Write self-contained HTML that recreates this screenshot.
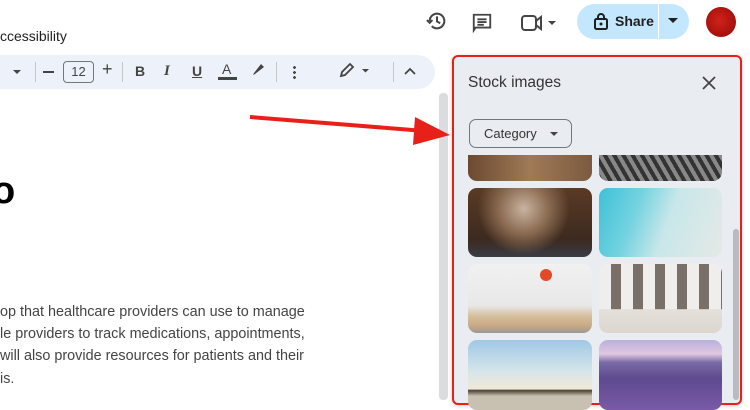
<!DOCTYPE html>
<html><head><meta charset="utf-8"><style>
*{box-sizing:border-box;margin:0;padding:0}
body{width:750px;height:400px;overflow:hidden;background:#fff;font-family:"Liberation Sans",Arial,sans-serif;position:relative;color:#1f1f1f}
.a{position:absolute}
.tb{left:-20px;top:55px;width:455px;height:34px;background:#edf2fa;border-radius:17px}
.t{position:absolute;top:63px;font-size:14px;font-weight:bold;color:#444}
.sep{position:absolute;top:62px;width:1px;height:20px;background:#c7c7c7}
.p{position:absolute;left:0;font-size:14.4px;color:#444;white-space:nowrap}
.img{position:absolute;border-radius:9px;overflow:hidden}
</style></head><body>
<div class="a" style="left:0;top:28px;font-size:14px;color:#1f1f1f">ccessibility</div>
<svg class="a" style="left:426px;top:10px" width="22" height="22" viewBox="0 0 24 24"><path d="M4 12a8 8 0 1 1 2.3 5.6" fill="none" stroke="#444" stroke-width="2.2"/><path d="M1 11l3 3 3-3" fill="none" stroke="#444" stroke-width="2.2"/><path d="M12 7v5.5l3.5 2" fill="none" stroke="#444" stroke-width="2.2"/></svg>
<svg class="a" style="left:471px;top:12px" width="22" height="22" viewBox="0 0 24 24"><path d="M3 3h18v14H5l-2 3z" fill="none" stroke="#444" stroke-width="2"/><path d="M7 8h10M7 11h10M7 14h7" stroke="#444" stroke-width="2"/></svg>
<svg class="a" style="left:520px;top:12px" width="40" height="22" viewBox="0 0 40 22"><rect x="2" y="4" width="14" height="14" rx="3" fill="none" stroke="#444" stroke-width="2"/><path d="M16 9l5-4v12l-5-4z" fill="none" stroke="#444" stroke-width="2"/><path d="M28 9l4 4 4-4z" fill="#444"/></svg>
<div class="a" style="left:577px;top:4px;width:112px;height:35px;background:#c2e7ff;border-radius:18px"></div>
<div class="a" style="left:658px;top:4px;width:1px;height:35px;background:#fff"></div>
<svg class="a" style="left:593px;top:12px" width="16" height="18" viewBox="0 0 16 18"><rect x="2" y="7" width="12" height="10" rx="1.5" fill="none" stroke="#1f1f1f" stroke-width="2"/><path d="M5 7V5a3 3 0 0 1 6 0v2" fill="none" stroke="#1f1f1f" stroke-width="2"/><circle cx="8" cy="12" r="1.5" fill="#1f1f1f"/></svg>
<div class="a" style="left:615px;top:13px;font-size:14px;font-weight:bold;color:#1f1f1f">Share</div>
<svg class="a" style="left:668px;top:18px" width="10" height="6"><path d="M0 0h10L5 5z" fill="#1f1f1f"/></svg>
<div class="a" style="left:706px;top:7px;width:30px;height:30px;border-radius:50%;background:radial-gradient(circle at 45% 45%,#d0231a,#a5100c 70%,#c01a10)"></div>
<div class="a tb"></div>
<svg class="a" style="left:13px;top:70px" width="8" height="5"><path d="M0 0h8L4 4z" fill="#444"/></svg>
<div class="sep" style="left:35px"></div>
<div class="a" style="left:43px;top:71px;width:11px;height:2px;background:#444"></div>
<div class="a" style="left:63px;top:61px;width:31px;height:22px;border:1px solid #747775;border-radius:4px;font-size:13px;text-align:center;line-height:20px;color:#444">12</div>
<div class="a" style="left:102px;top:59px;font-size:18px;color:#444">+</div>
<div class="sep" style="left:122px"></div>
<div class="t" style="left:135px">B</div>
<div class="t" style="left:164px;font-style:italic;font-family:'Liberation Serif',serif;font-size:15px">I</div>
<div class="t" style="left:192px;text-decoration:underline">U</div>
<div class="t" style="left:222px;font-weight:normal;top:61px">A</div>
<div class="a" style="left:218px;top:77px;width:19px;height:3px;background:#444"></div>
<svg class="a" style="left:251px;top:62px" width="14" height="14" viewBox="0 0 14 14"><path d="M3 11l-1 2 2-1 9-7-3-3z" fill="#444"/></svg>
<div class="sep" style="left:276px"></div>
<div class="a" style="left:293px;top:65px;width:3px;height:14px;background:radial-gradient(circle,#444 1.3px,transparent 1.5px) 0 0/3px 5px"></div>
<svg class="a" style="left:339px;top:62px" width="34" height="16" viewBox="0 0 34 16"><path d="M2 14l1-4 8-8 3 3-8 8z" fill="none" stroke="#444" stroke-width="1.8"/><path d="M23 7h7l-3.5 3.5z" fill="#444"/></svg>
<div class="sep" style="left:393px"></div>
<svg class="a" style="left:404px;top:67px" width="12" height="8"><path d="M1 7l5-5 5 5" fill="none" stroke="#444" stroke-width="1.8"/></svg>
<div class="a" style="left:439px;top:93px;width:9px;height:307px;background:#dadce0;border-radius:4px"></div>
<div class="a" style="left:-8px;top:170px;font-size:38px;font-weight:bold;color:#000">o</div>
<div class="p" style="top:304px">op that healthcare providers can use to manage</div>
<div class="p" style="top:326px">le providers to track medications, appointments,</div>
<div class="p" style="top:348px">will also provide resources for patients and their</div>
<div class="p" style="top:371px">is.</div>
<div class="a" style="left:452px;top:55px;width:290px;height:350px;background:#e9edf2;border:2px solid #e8201a;border-radius:6px;box-shadow:0 1px 4px rgba(0,0,0,.2)"></div>
<div class="a" style="left:468px;top:74px;font-size:15.5px;color:#333">Stock images</div>
<svg class="a" style="left:702px;top:76px" width="14" height="14"><path d="M1 1l12 12M13 1L1 13" stroke="#444" stroke-width="1.8"/></svg>
<div class="a" style="left:469px;top:119px;width:103px;height:29px;border:1px solid #747775;border-radius:7px"></div>
<div class="a" style="left:484px;top:126px;font-size:13px;color:#333">Category</div>
<svg class="a" style="left:550px;top:132px" width="8" height="5"><path d="M0 0h8L4 4z" fill="#444"/></svg>
<div class="img" style="left:468px;top:155px;width:124px;height:26px;border-radius:0 0 9px 9px;background:linear-gradient(90deg,#6b4a32,#a07a55,#7b5a40)"></div>
<div class="img" style="left:599px;top:155px;width:123px;height:26px;border-radius:0 0 9px 9px;background:repeating-linear-gradient(60deg,#333 0 4px,#888 4px 8px)"></div>
<div class="img" style="left:468px;top:188px;width:124px;height:69px;background:radial-gradient(circle at 45% 30%,#c9b3a0 0,#8a6a50 30%,transparent 55%),linear-gradient(180deg,#5a3a24,#3c2a20 75%,#3a3c45)"></div>
<div class="img" style="left:599px;top:188px;width:123px;height:69px;background:linear-gradient(110deg,#3ec1d6 0,#74d3e0 30%,#c8e7ea 55%,#e6e8e6 100%)"></div>
<div class="img" style="left:468px;top:264px;width:124px;height:69px;background:linear-gradient(180deg,#f1f1f1 0,#e8e8e8 60%,#d6c0a0 75%,#c9a882 90%,#999 100%)"></div>
<div class="a" style="left:540px;top:269px;width:12px;height:12px;border-radius:50%;background:#e04a2a"></div>
<div class="img" style="left:599px;top:264px;width:123px;height:69px;background:linear-gradient(180deg,transparent 0,transparent 65%,#e4e0da 66%,#dcd6cf 100%),repeating-linear-gradient(90deg,#f0eeec 0 12px,#7a706a 12px 22px)"></div>
<div class="img" style="left:468px;top:340px;width:124px;height:70px;background:linear-gradient(180deg,#9fc8e6 0,#d6e6ea 45%,#f0e8d8 70%,#4a4032 72%,#c8c0b0 80%)"></div>
<div class="img" style="left:599px;top:340px;width:123px;height:70px;background:linear-gradient(180deg,#b9b0dc 0,#e0c8e0 20%,#7a6aa8 32%,#5e4a8e 55%,#7a5aa8 100%)"></div>
<div class="a" style="left:733px;top:229px;width:6px;height:171px;background:#b8bbbf;border-radius:3px"></div>
<svg class="a" style="left:245px;top:105px" width="210" height="45" viewBox="0 0 210 45"><path d="M5 12L180 26" stroke="#e8201a" stroke-width="4"/><path d="M170 12L205 30 168 40z" fill="#e8201a"/></svg>
</body></html>
